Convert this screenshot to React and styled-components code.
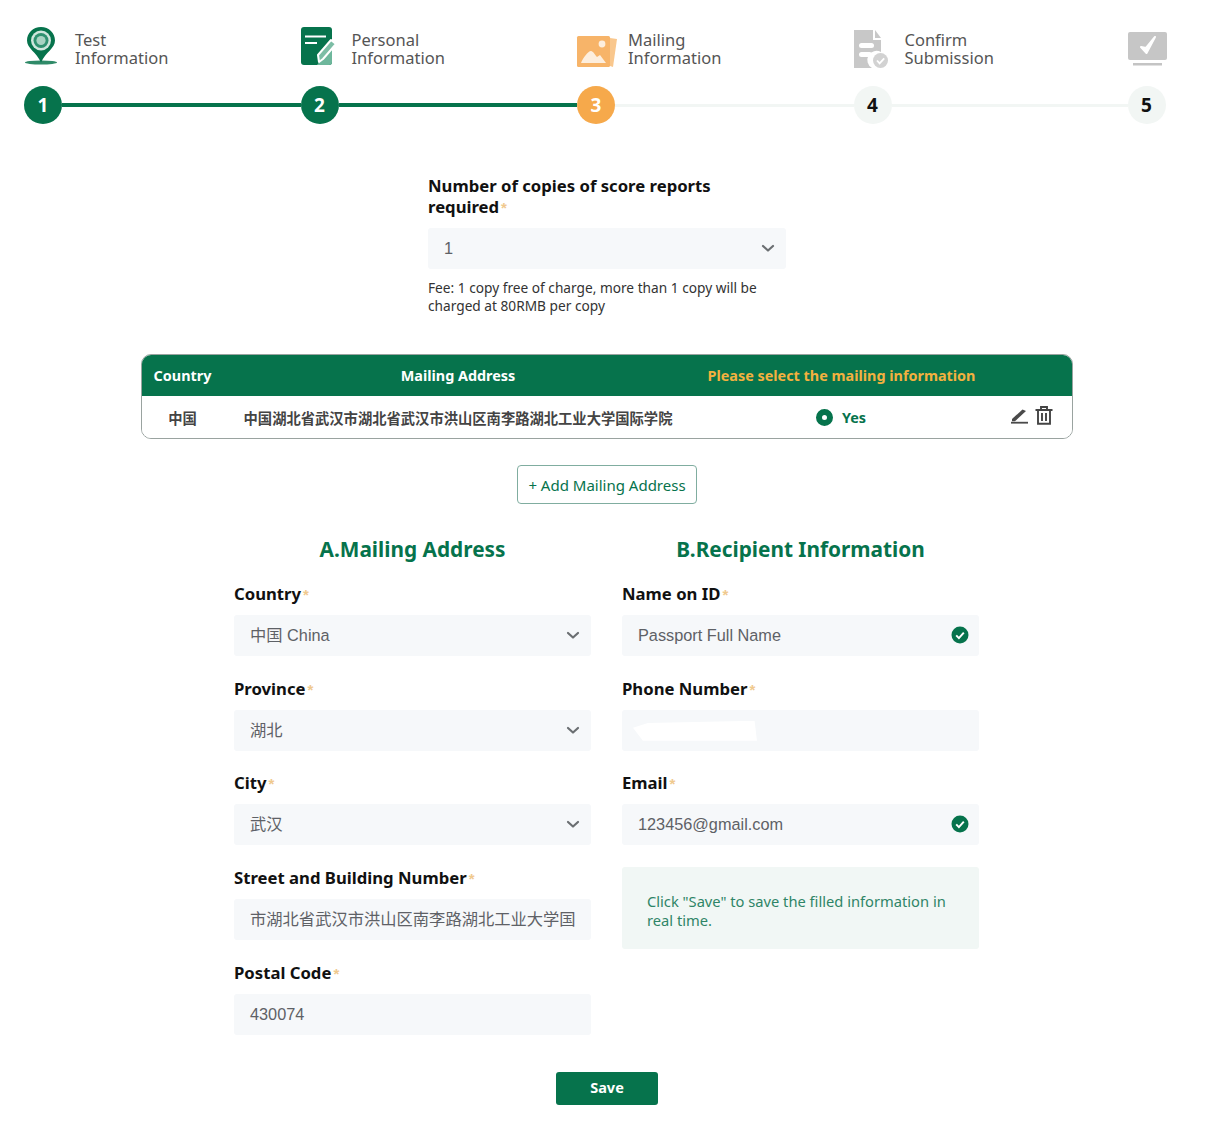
import React from 'react'
import styled, { createGlobalStyle } from 'styled-components'

const green = '#06734c'
const orange = '#f6a94b'

const Global = createGlobalStyle`
  html, body { margin: 0; padding: 0; background: #fff; }
  body { font-family: "Noto Sans", "Noto Sans CJK SC", sans-serif; color: #111; }
  * { box-sizing: border-box; }
`

const Page = styled.div`
  width: 1216px;
  height: 1125px;
  overflow: hidden;
  padding: 25px 2px 0 0;
`

const Stepper = styled.div`
  display: grid;
  grid-template-columns: 276.5px 276.5px 276.5px 274px 45px;
  padding-left: 24px;
`

const Step = styled.div`
  display: flex;
  flex-direction: column;
  gap: 19px;
`

const StepTop = styled.div`
  display: flex;
  align-items: center;
  gap: 17px;
  height: 42px;
`

const StepIcon = styled.div`
  width: 34px;
  height: 42px;
  display: flex;
  align-items: center;
  justify-content: center;
  flex: none;

  svg {
    flex: none;
  }
`

const StepLabel = styled.div`
  width: 110px;
  margin-top: 6px;
  font-size: 16.5px;
  line-height: 18px;
  color: #555;
`

const Track = styled.div`
  display: flex;
  align-items: center;
`

const Dot = styled.div`
  width: 38px;
  height: 38px;
  border-radius: 50%;
  flex: none;
  display: flex;
  align-items: center;
  justify-content: center;
  font-size: 19px;
  font-weight: 700;
  background: ${p => p.$bg};
  color: ${p => p.$color};
`

const Line = styled.div`
  flex: 1;
  height: ${p => p.$done ? '4px' : '3px'};
  background: ${p => p.$done ? green : '#f2f6f4'};
`

const Copies = styled.section`
  width: 358px;
  margin: 51px auto 0;
`

const Label = styled.div`
  max-width: ${p => p.$wrap ? '300px' : 'none'};
  font-size: 16.7px;
  line-height: 21px;
  font-weight: 700;
  color: #111;
`

const Star = styled.span`
  font-family: "Liberation Sans", sans-serif;
  color: #f0c98e;
  font-size: 15px;
  line-height: 0;
  margin-left: 2px;
`

const InputBox = styled.div`
  position: relative;
  height: 41px;
  margin-top: 11px;
  padding: 0 10px 1px 16px;
  background: #f6f8fa;
  border-radius: 3px;
  display: flex;
  align-items: center;
  justify-content: space-between;
  font-family: "Liberation Sans", "Noto Sans CJK SC", sans-serif;
  font-size: 16.3px;
  line-height: 20px;
  color: #5e6166;
  white-space: nowrap;
`

const Fee = styled.p`
  margin: 10px 0 0;
  font-size: 13.7px;
  line-height: 18px;
  color: #333;
`

const Table = styled.div`
  width: 932px;
  margin: 39px auto 0;
  border: 1px solid #9aa3a0;
  border-radius: 10px;
  overflow: hidden;
`

const Row = styled.div`
  display: grid;
  grid-template-columns: 81px 470px 297px 1fr;
  align-items: center;
  text-align: center;
  height: ${p => p.$head ? '41px' : '42px'};
  background: ${p => p.$head ? green : '#fff'};
  font-size: 14.4px;
  font-weight: 700;
  color: ${p => p.$head ? '#fff' : '#444'};
`

const Hint = styled.div`
  color: #f3b13f;
`

const Cjk = styled.div`
  font-family: "Noto Sans CJK SC", sans-serif;
  font-size: 14.3px;
  white-space: nowrap;
`

const Radio = styled.div`
  display: flex;
  align-items: center;
  justify-content: center;
  gap: 9px;
  padding-right: 1px;
  color: ${green};
`

const RadioDot = styled.span`
  width: 17px;
  height: 17px;
  border-radius: 50%;
  border: 6px solid ${green};
  background: #fff;
`

const Actions = styled.div`
  display: flex;
  justify-content: flex-end;
  align-items: center;
  gap: 6px;
  padding-right: 19px;
  padding-bottom: 3px;
`

const AddWrap = styled.div`
  display: flex;
  justify-content: center;
  margin-top: 26px;
`

const AddButton = styled.button`
  width: 180px;
  height: 39px;
  background: #fff;
  border: 1px solid #80ada0;
  border-radius: 4px;
  color: ${green};
  font-family: inherit;
  font-size: 15px;
  padding: 0;
`

const Columns = styled.div`
  display: grid;
  grid-template-columns: 357px 357px;
  gap: 31px;
  justify-content: center;
  margin-top: 29px;
  padding-right: 1px;
`

const Column = styled.div`
  display: flex;
  flex-direction: column;
`

const ColumnTitle = styled.h2`
  margin: 0 0 18px;
  height: 32px;
  line-height: 32px;
  font-size: 20.8px;
  font-weight: 700;
  color: ${green};
  text-align: center;
`

const Field = styled.div`
  margin-bottom: 21.7px;
`

const Smudge = styled.div`
  position: absolute;
  left: 11px;
  top: 11px;
  width: 124px;
  height: 20px;
  background: #fff;
  clip-path: polygon(0 35%, 12% 12%, 98% 0, 100% 100%, 8% 100%);
`

const Notice = styled.div`
  height: 82px;
  padding: 25px 25px 0;
  background: #f1f7f5;
  border-radius: 3px;
  font-size: 14.7px;
  line-height: 19px;
  color: #2f8567;
`

const SaveWrap = styled.div`
  display: flex;
  justify-content: center;
  margin-top: 16px;
`

const SaveButton = styled.button`
  width: 102px;
  height: 33px;
  border: none;
  border-radius: 3px;
  background: ${green};
  color: #fff;
  font-family: inherit;
  font-size: 14.5px;
  font-weight: 700;
  padding: 0 0 3px;
`

const PinIcon = () => (
  <svg width="34" height="40" viewBox="0 0 34 40">
    <ellipse cx="17" cy="36.5" rx="16" ry="2" fill="#2f8a68" />
    <path d="M17 1C9 1 3 7 3 14.5c0 8 9 11 14 22 5-11 14-14 14-22C31 7 25 1 17 1z" fill={green} />
    <circle cx="17" cy="14.5" r="10" fill="#cfe6dd" />
    <circle cx="17" cy="14.5" r="7.5" fill="#2f9170" />
    <circle cx="17" cy="14.5" r="4.6" fill="#a9d3c3" />
  </svg>
)

const FormIcon = () => (
  <svg width="40" height="40" viewBox="0 0 40 40">
    <path d="M3 4a3 3 0 0 1 3-3h25a3 3 0 0 1 3 3v32a3 3 0 0 1-3 3H6a3 3 0 0 1-3-3z" fill={green} />
    <path d="M19 39h12a3 3 0 0 0 3-3V20z" fill="#6eb79c" />
    <path d="M7 10.5h21M7 17h12" stroke="#fff" strokeWidth="2.2" fill="none" />
    <path d="M21 36l-1-7 13-15 5 4-13 15z" fill="#7cbda5" stroke="#fff" strokeWidth="2" strokeLinejoin="round" />
  </svg>
)

const PhotoIcon = () => (
  <svg width="46" height="44" viewBox="-6 -10 46 44">
    <path d="M33 4l7 1-4 28-3-1z" fill="#f9c78d" />
    <rect x="0" y="2" width="33" height="31" rx="1.5" fill="#f7b469" />
    <circle cx="25" cy="10" r="3.4" fill="#fdeedd" />
    <path d="M4 29c2-5 7-12 10-12 2 0 4 4 6 6l3-2 6 8z" fill="#fdeedd" />
  </svg>
)

const DocIcon = () => (
  <svg width="36" height="46" viewBox="0 -6 36 46">
    <path d="M1 1h19v10h8v12a9 9 0 0 0-9 16H1z" fill="#c8c8c8" />
    <path d="M22 1l6 8h-6z" fill="#c8c8c8" />
    <rect x="6" y="14" width="15" height="5" rx="2.5" fill="#fff" />
    <rect x="6" y="23" width="13" height="5" rx="2.5" fill="#fff" />
    <circle cx="27.5" cy="31.5" r="7.5" fill="#d2d2d2" />
    <path d="M24 31.5l2.6 2.8 4.6-5" stroke="#fff" strokeWidth="1.8" fill="none" />
  </svg>
)

const ScreenIcon = () => (
  <svg width="44" height="44" viewBox="-5 -8 44 44">
    <rect x="0" y="0" width="39" height="28" rx="2" fill="#c6c6c6" />
    <path d="M13 15l5.5 6L27 5l-9 11z" fill="#fff" stroke="#fff" strokeWidth="2" strokeLinejoin="round" />
    <rect x="5" y="31" width="29" height="2.5" fill="#c4c4c4" />
  </svg>
)

const Chevron = () => (
  <svg width="16" height="14" viewBox="0 0 16 14" fill="none" stroke="#6b6f72" strokeWidth="2.2" strokeLinecap="round" strokeLinejoin="round">
    <path d="M3 5l5 4.5L13 5" />
  </svg>
)

const Check = () => (
  <svg width="18" height="18" viewBox="0 0 18 18">
    <circle cx="9" cy="9" r="8.5" fill={green} />
    <path d="M5.2 9.4l2.7 2.7 4.9-5.4" stroke="#fff" strokeWidth="2" fill="none" />
  </svg>
)

const Pencil = () => (
  <svg width="19" height="16" viewBox="0 0 19 16" fill="#4a4a4a">
    <path d="M2 11L12.5 1.5 16 3 5 13.2H2z" />
    <rect x="1" y="13.8" width="17" height="1.8" />
  </svg>
)

const Trash = () => (
  <svg width="18" height="19" viewBox="0 0 18 19" fill="none" stroke="#444" strokeWidth="1.9">
    <path d="M0.5 4h17M6 3.5V1h6v2.5" />
    <path d="M3 4v13.8h12V4M7 7v8M11 7v8" />
  </svg>
)

const steps = [
  { icon: <PinIcon />, label: 'Test Information', bg: green, color: '#fff', done: true },
  { icon: <FormIcon />, label: 'Personal Information', bg: green, color: '#fff', done: true },
  { icon: <PhotoIcon />, label: 'Mailing Information', bg: orange, color: '#fff' },
  { icon: <DocIcon />, label: 'Confirm Submission', bg: '#f2f6f4', color: '#111' },
]

const leftFields = [
  { label: 'Country', value: '中国 China', select: true },
  { label: 'Province', value: '湖北', select: true },
  { label: 'City', value: '武汉', select: true },
  { label: 'Street and Building Number', value: '市湖北省武汉市洪山区南李路湖北工业大学国' },
  { label: 'Postal Code', value: '430074' },
]

const rightFields = [
  { label: 'Name on ID', value: 'Passport Full Name', check: true },
  { label: 'Phone Number', smudge: true },
  { label: 'Email', value: '123456@gmail.com', check: true },
]

const FormField = ({ label, value, select, check, smudge }) => (
  <Field>
    <Label>{label}<Star>*</Star></Label>
    <InputBox>
      <span>{value}</span>
      {select && <Chevron />}
      {check && <Check />}
      {smudge && <Smudge />}
    </InputBox>
  </Field>
)

const App = () => {
  return (
    <Page>
      <Global />
      <Stepper>
        {steps.map((s, i) => (
          <Step key={i}>
            <StepTop>
              <StepIcon>{s.icon}</StepIcon>
              <StepLabel>{s.label}</StepLabel>
            </StepTop>
            <Track>
              <Dot $bg={s.bg} $color={s.color}>{i + 1}</Dot>
              <Line $done={s.done} />
            </Track>
          </Step>
        ))}
        <Step>
          <StepTop>
            <StepIcon><ScreenIcon /></StepIcon>
          </StepTop>
          <Track>
            <Dot $bg="#f2f6f4" $color="#111">5</Dot>
          </Track>
        </Step>
      </Stepper>

      <Copies>
        <Label $wrap>Number of copies of score reports required<Star>*</Star></Label>
        <InputBox>
          <span>1</span>
          <Chevron />
        </InputBox>
        <Fee>Fee: 1 copy free of charge, more than 1 copy will be charged at 80RMB per copy</Fee>
      </Copies>

      <Table>
        <Row $head>
          <div>Country</div>
          <div>Mailing Address</div>
          <Hint>Please select the mailing information</Hint>
          <div />
        </Row>
        <Row>
          <Cjk>中国</Cjk>
          <Cjk>中国湖北省武汉市湖北省武汉市洪山区南李路湖北工业大学国际学院</Cjk>
          <Radio><RadioDot />Yes</Radio>
          <Actions><Pencil /><Trash /></Actions>
        </Row>
      </Table>

      <AddWrap>
        <AddButton>+ Add Mailing Address</AddButton>
      </AddWrap>

      <Columns>
        <Column>
          <ColumnTitle>A.Mailing Address</ColumnTitle>
          {leftFields.map(f => <FormField key={f.label} {...f} />)}
        </Column>
        <Column>
          <ColumnTitle>B.Recipient Information</ColumnTitle>
          {rightFields.map(f => <FormField key={f.label} {...f} />)}
          <Notice>Click "Save" to save the filled information in real time.</Notice>
        </Column>
      </Columns>

      <SaveWrap>
        <SaveButton>Save</SaveButton>
      </SaveWrap>
    </Page>
  )
}

export default App
